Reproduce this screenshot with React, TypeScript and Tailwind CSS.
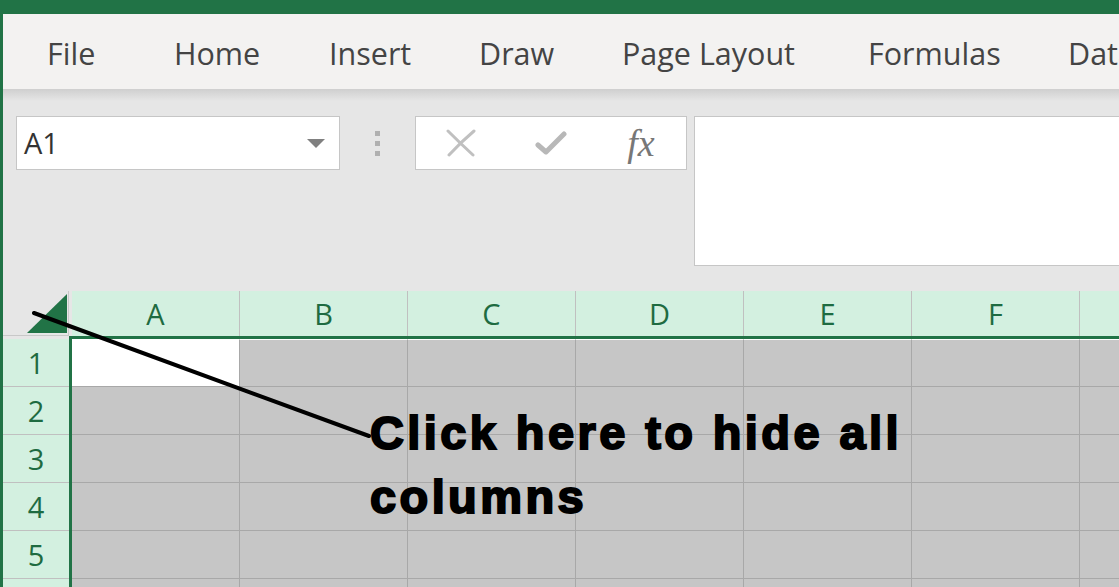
import React from 'react';

const tabs: { label: string; w: string }[] = [
  { label: 'File', w: 'w-[127px]' },
  { label: 'Home', w: 'w-[155px]' },
  { label: 'Insert', w: 'w-[150px]' },
  { label: 'Draw', w: 'w-[143px]' },
  { label: 'Page Layout', w: 'w-[246px]' },
  { label: 'Formulas', w: 'w-[200px]' },
  { label: 'Data', w: 'w-[120px]' },
];

const cols = ['A', 'B', 'C', 'D', 'E', 'F', ''];
const rows = [1, 2, 3, 4, 5, 6];

const App: React.FC = () => {
  return (
    <div className="relative w-[1119px] h-[587px] overflow-hidden bg-[#e6e6e6] font-['Open_Sans',sans-serif]">
      {/* title bar strip */}
      <div className="h-[14px] bg-[#217346]" />

      <div className="flex h-[573px]">
        <div className="w-[3px] shrink-0 bg-[#217346]" />

        <div className="flex-1 flex flex-col overflow-hidden">
          {/* ribbon tabs */}
          <div className="h-[75px] shrink-0 bg-[#f3f2f1] flex items-center pl-[44px] pt-[4px]">
            {tabs.map((t) => (
              <div key={t.label} className={`${t.w} shrink-0 text-[30.5px] text-[#444444] whitespace-nowrap`}>
                {t.label}
              </div>
            ))}
          </div>
          <div className="h-[12px] shrink-0 bg-gradient-to-b from-[#cfcfcf] to-[#e6e6e6]" />

          {/* formula bar row */}
          <div className="h-[190px] shrink-0 flex items-start pt-[15px] pl-[13px]">
            <div className="w-[324px] h-[54px] bg-white border border-[#c6c6c6] flex items-center justify-between pl-[7px] pr-[14px]">
              <span className="text-[29px] text-[#333333]">A1</span>
              <svg width="18" height="9" viewBox="0 0 18 9">
                <path d="M0 0 L18 0 L9 9 Z" fill="#808080" />
              </svg>
            </div>
            <div className="w-[75px] h-[54px] flex flex-col items-center justify-center gap-[5px]">
              <div className="w-[5px] h-[5px] bg-[#b0b0b0]" />
              <div className="w-[5px] h-[5px] bg-[#b0b0b0]" />
              <div className="w-[5px] h-[5px] bg-[#b0b0b0]" />
            </div>
            <div className="w-[272px] h-[54px] bg-white border border-[#c6c6c6] flex items-center">
              <div className="w-[90px] flex justify-center">
                <svg width="30" height="28" viewBox="0 0 30 28">
                  <path d="M2 2 Q14 14 27 26 M3 26 Q15 13 28 2" stroke="#c0c0c0" strokeWidth="3" fill="none" strokeLinecap="round" />
                </svg>
              </div>
              <div className="w-[90px] flex justify-center">
                <svg width="32" height="26" viewBox="0 0 32 26">
                  <path d="M3 15 L11 22 L29 4" stroke="#b8b8b8" strokeWidth="5" fill="none" strokeLinecap="round" strokeLinejoin="round" />
                </svg>
              </div>
              <div className="w-[90px] flex justify-center">
                <span className="text-[38px] italic text-[#777777] font-['Liberation_Serif',serif] leading-none">fx</span>
              </div>
            </div>
            <div className="ml-[7px] flex-1 h-[150px] bg-white border border-[#c6c6c6] border-r-0" />
          </div>

          {/* sheet */}
          <div className="flex-1 flex flex-col">
            <div className="flex h-[48px] shrink-0">
              <div className="w-[66px] shrink-0 h-[45px] bg-[#e6e6e6] border-r border-b border-[#c8c8c8] flex items-end justify-end pr-[1px] pb-[2px]">
                <svg width="40" height="39" viewBox="0 0 40 39">
                  <path d="M0 39 L40 0 L40 39 Z" fill="#217346" />
                </svg>
              </div>
              <div className="w-[3px] shrink-0" />
              <div className="flex flex-col">
                <div className="flex h-[45px] bg-[#d3f0e0]">
                  {cols.map((c, i) => (
                    <div
                      key={i}
                      className="w-[168px] shrink-0 border-r border-[#c0c0c0] flex items-center justify-center text-[29px] text-[#1e6b41]"
                    >
                      {c}
                    </div>
                  ))}
                </div>
                <div className="h-[3px] bg-[#217346] -ml-[3px]" />
              </div>
            </div>

            {rows.map((r) => (
              <div key={r} className="flex h-[48px] shrink-0">
                <div className="w-[66px] shrink-0 bg-[#d3f0e0] border-b border-[#c0c0c0] flex items-center justify-center text-[29px] text-[#1e6b41]">
                  {r}
                </div>
                <div className="w-[3px] shrink-0 bg-[#217346]" />
                {cols.map((c, i) => (
                  <div
                    key={i}
                    className={`w-[168px] shrink-0 border-r border-b border-[#a8a8a8] ${
                      r === 1 ? (i === 0 ? 'bg-white border-t border-t-white' : 'bg-[#c6c6c6] border-t border-t-white') : 'bg-[#c6c6c6]'
                    }`}
                  />
                ))}
              </div>
            ))}
          </div>
        </div>
      </div>

      {/* annotation */}
      <svg className="absolute left-0 top-0 pointer-events-none" width="1119" height="587">
        <line x1="34" y1="313" x2="369" y2="436" stroke="#000000" strokeWidth="4" strokeLinecap="round" />
      </svg>
      <div className="absolute left-[370px] top-[401px] text-[47px] leading-[64px] font-bold tracking-[3.4px] text-black [-webkit-text-stroke:2px_#000] font-['Liberation_Sans',Arial,sans-serif] whitespace-nowrap">
        Click here to hide all
        <br />
        columns
      </div>
    </div>
  );
};

export default App;
